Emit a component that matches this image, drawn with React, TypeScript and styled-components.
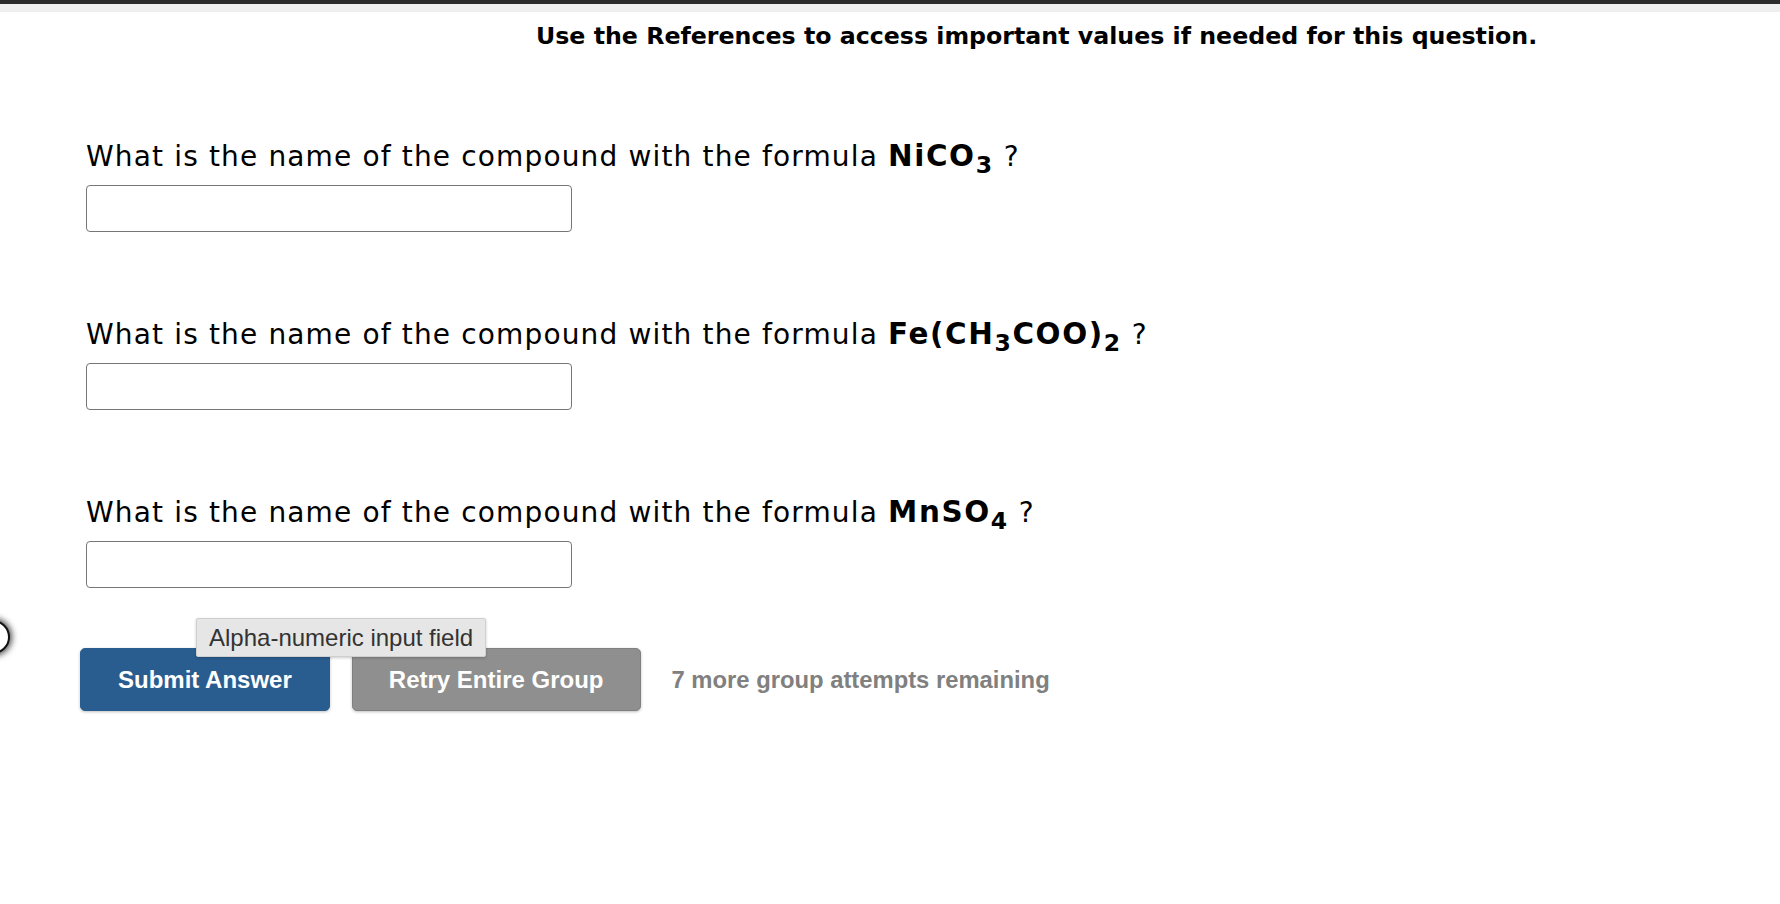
import styled, { createGlobalStyle } from "styled-components";

const GlobalStyle = createGlobalStyle`
  html, body {
    margin: 0;
    padding: 0;
    background: #ffffff;
  }
  body {
    font-family: "DejaVu Sans", Verdana, sans-serif;
    color: #000;
  }
`;

const Page = styled.div`
  position: relative;
  width: 1780px;
  height: 904px;
  overflow: hidden;
  background: #fff;
`;

const TopBar = styled.div`
  height: 4px;
  background: #2a2b2a;
`;

const SubBar = styled.div`
  height: 8px;
  background: #efefef;
`;

const Notice = styled.div`
  padding: 10px 0 0 536px;
  font-family: "DejaVu Sans", Verdana, sans-serif;
  font-weight: bold;
  font-size: 23.7px;
  line-height: 28px;
`;

const Questions = styled.div`
  display: flex;
  flex-direction: column;
  gap: 86px;
  padding: 90px 0 0 86px;
`;

const Question = styled.div`
  display: flex;
  flex-direction: column;
  gap: 12px;
`;

const Prompt = styled.div`
  font-size: 28px;
  letter-spacing: 1.15px;
  line-height: 32px;
  white-space: nowrap;
`;

const Formula = styled.b`
  font-weight: bold;
  font-size: 1.05em;
  letter-spacing: 1.6px;

  sub {
    font-size: 0.8em;
    vertical-align: -0.3em;
    line-height: 0;
  }
`;

const AnswerInput = styled.input`
  box-sizing: border-box;
  width: 486px;
  height: 47px;
  border: 1.5px solid #767676;
  border-radius: 4px;
  background: #fff;
  font-size: 22px;
  padding: 0 8px;
  outline: none;
`;

const Actions = styled.div`
  position: relative;
  display: flex;
  align-items: center;
  gap: 22px;
  margin: 60px 0 0 80px;
  font-family: "Liberation Sans", Arial, sans-serif;
`;

const Button = styled.button<{ $tone: "primary" | "muted" }>`
  box-sizing: border-box;
  height: 63px;
  padding: 0 ${(p) => (p.$tone === "primary" ? "37px" : "36px")};
  border-radius: 5px;
  border: 1px solid ${(p) => (p.$tone === "primary" ? "#2a5d8f" : "#808080")};
  background: ${(p) => (p.$tone === "primary" ? "#2a5d8f" : "#8f8f8f")};
  color: #fff;
  font-family: "Liberation Sans", Arial, sans-serif;
  font-weight: bold;
  font-size: 24px;
  box-shadow: 0 1px 3px rgba(0, 0, 0, 0.25);
  cursor: pointer;
`;

const Attempts = styled.span`
  margin-left: 9px;
  color: #808080;
  font-weight: bold;
  font-size: 23.8px;
`;

const Tooltip = styled.div`
  position: absolute;
  left: 116px;
  top: -30px;
  box-sizing: border-box;
  height: 39px;
  padding: 0 12px;
  display: flex;
  align-items: center;
  background: #e6e6e6;
  border: 1px solid #cfcfcf;
  border-radius: 2px;
  box-shadow: 0 1px 3px rgba(0, 0, 0, 0.2);
  color: #333;
  font-family: "Liberation Sans", Arial, sans-serif;
  font-size: 24px;
  white-space: nowrap;
`;

const EdgeKnob = styled.div`
  position: absolute;
  left: -24px;
  top: 620px;
  width: 30px;
  height: 30px;
  border-radius: 50%;
  background: #fff;
  border: 2px solid #111;
  box-shadow: 0 0 6px 2px rgba(0, 0, 0, 0.7);
`;

const questions: { parts: [string, string?][] }[] = [
  { parts: [["NiCO"], ["", "3"]] },
  { parts: [["Fe(CH"], ["", "3"], ["COO)"], ["", "2"]] },
  { parts: [["MnSO"], ["", "4"]] },
];

const App = () => {
  return (
    <Page>
      <GlobalStyle />
      <TopBar />
      <SubBar />
      <Notice>
        Use the References to access important values if needed for this
        question.
      </Notice>
      <Questions>
        {questions.map((q, i) => (
          <Question key={i}>
            <Prompt>
              What is the name of the compound with the formula{" "}
              <Formula>
                {q.parts.map(([text, sub], j) =>
                  sub ? <sub key={j}>{sub}</sub> : <span key={j}>{text}</span>
                )}
              </Formula>{" "}
              ?
            </Prompt>
            <AnswerInput type="text" aria-label="answer" />
          </Question>
        ))}
      </Questions>
      <Actions>
        <Button $tone="primary">Submit Answer</Button>
        <Button $tone="muted">Retry Entire Group</Button>
        <Attempts>7 more group attempts remaining</Attempts>
        <Tooltip>Alpha-numeric input field</Tooltip>
      </Actions>
      <EdgeKnob />
    </Page>
  );
};

export default App;
